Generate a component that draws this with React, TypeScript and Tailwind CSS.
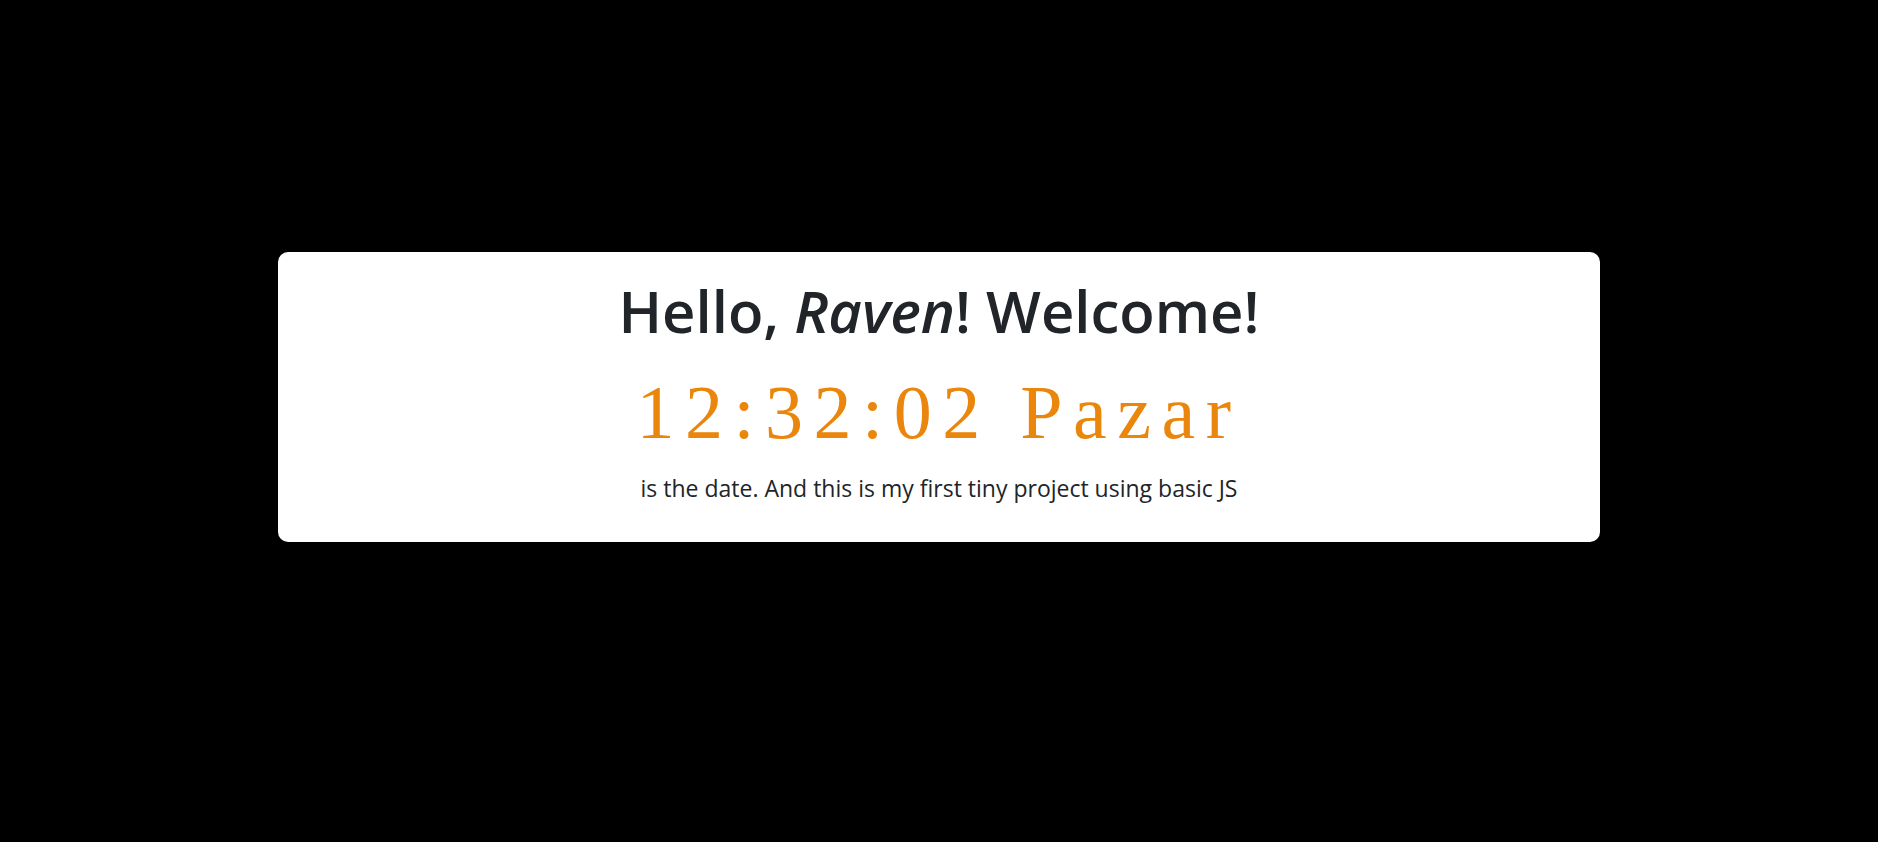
export default function App() {
  const name = 'Raven'
  const time = '12:32:02'
  const day = 'Pazar'

  return (
    <div className="min-h-[842px] w-full bg-black pt-[252px]">
      <div className="mx-auto flex h-[290px] w-[1322px] flex-col items-center rounded-[10px] bg-white pt-[30px] text-center">
        <h1 className="font-['Open_Sans',sans-serif] text-[58px] leading-none font-semibold text-[#212529]">
          Hello, <em>{name}</em>! Welcome!
        </h1>
        <div className="mt-[34px] font-['Liberation_Serif',serif] text-[76px] leading-none tracking-[10.5px] text-[#ea860b]">
          {time} {day}
        </div>
        <p className="mt-[27px] font-['Open_Sans',sans-serif] text-[23px] leading-none text-[#212529]">
          is the date. And this is my first tiny project using basic JS
        </p>
      </div>
    </div>
  )
}
